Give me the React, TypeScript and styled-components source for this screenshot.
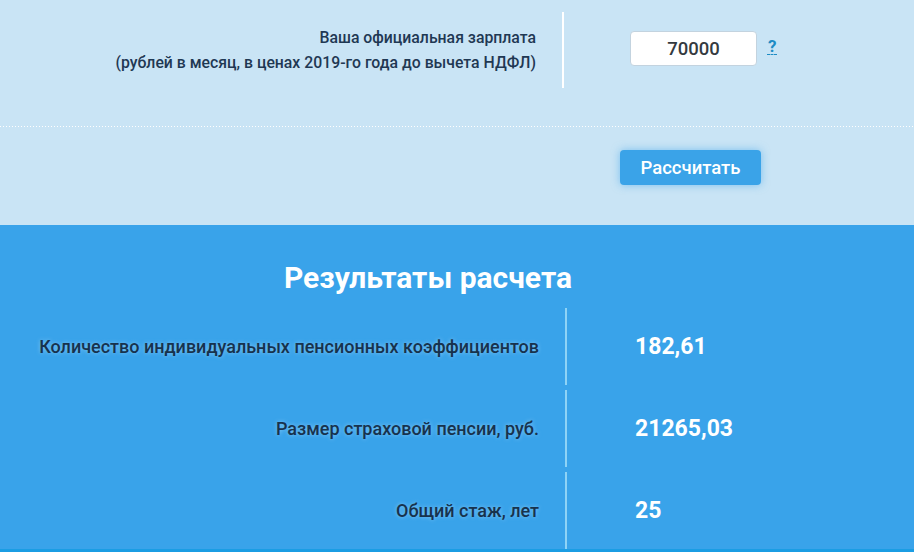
import styled, { createGlobalStyle } from "styled-components";

const GlobalStyle = createGlobalStyle`
    html, body {
        margin: 0;
        padding: 0;
        background: #c9e4f5;
        font-family: Roboto, "Liberation Sans", sans-serif;
    }
`;

const Page = styled.div`
    width: 914px;
    overflow: hidden;
`;

const Form = styled.section`
    background: #c9e4f5;
    padding-top: 12px;
    height: 213px;
`;

const FieldRow = styled.div`
    display: grid;
    grid-template-columns: 562px 2px 1fr;
    height: 76px;
`;

const FieldLabel = styled.div`
    display: flex;
    flex-direction: column;
    justify-content: center;
    align-items: flex-end;
    padding-right: 26px;
    font-size: 15.8px;
    font-weight: 500;
    line-height: 25px;
    color: #1f3853;
    text-align: right;
`;

const Divider = styled.div<{ $color: string }>`
    background: ${(p) => p.$color};
`;

const FieldControl = styled.div`
    display: flex;
    align-items: center;
    padding-left: 66px;
    padding-bottom: 3px;
    gap: 10px;
`;

const Input = styled.input`
    box-sizing: border-box;
    width: 127px;
    height: 35px;
    border: 1px solid #c3d3df;
    border-radius: 4px;
    background: #fff;
    text-align: center;
    font-family: Roboto, "Liberation Sans", sans-serif;
    font-size: 18.5px;
    font-weight: 500;
    color: #343a40;
    outline: none;
`;

const Hint = styled.span`
    font-size: 17px;
    font-weight: 700;
    color: #1e8cc4;
    border-bottom: 1px dashed #1e8cc4;
    line-height: 16px;
    margin-bottom: 4px;
    padding: 0 1px;
`;

const Dotted = styled.div`
    margin-top: 38px;
    height: 1px;
    background-image: linear-gradient(to right, #ffffff 50%, transparent 50%);
    background-size: 3px 1px;
`;

const Actions = styled.div`
    padding: 23px 0 0 620px;
`;

const Button = styled.button`
    width: 141px;
    height: 35px;
    border: none;
    border-radius: 4px;
    background: #3aa3e8;
    color: #fff;
    font-family: Roboto, "Liberation Sans", sans-serif;
    font-size: 18.5px;
    font-weight: 500;
    box-shadow: 0 0 8px rgba(58, 163, 232, 0.55);
    cursor: pointer;
`;

const Results = styled.section`
    background: #39a3ea;
    border-bottom: 3px solid #1b9de3;
    padding-top: 35px;
`;

const Title = styled.h2`
    margin: 0 0 12px;
    width: 856px;
    text-align: center;
    font-size: 30px;
    font-weight: 700;
    line-height: 36px;
    color: #fff;
`;

const ResultRow = styled.div`
    display: grid;
    grid-template-columns: 565px 2px 1fr;
    height: 77px;
    & + & {
        margin-top: 5px;
    }
`;

const ResultLabel = styled.div`
    display: flex;
    align-items: center;
    justify-content: flex-end;
    padding-right: 26px;
    font-size: 18px;
    font-weight: 500;
    color: #17324d;
    text-shadow: 0 0 4px rgba(180, 225, 255, 0.6);
`;

const ResultValue = styled.div`
    display: flex;
    align-items: center;
    padding-left: 68px;
    font-size: 23px;
    font-weight: 700;
    color: #fff;
`;

const results = [
    { label: "Количество индивидуальных пенсионных коэффициентов", value: "182,61" },
    { label: "Размер страховой пенсии, руб.", value: "21265,03" },
    { label: "Общий стаж, лет", value: "25" },
];

export default function App() {
    return (
        <Page>
            <GlobalStyle />
            <Form>
                <FieldRow>
                    <FieldLabel>
                        <span>Ваша официальная зарплата</span>
                        <span>(рублей в месяц, в ценах 2019-го года до вычета НДФЛ)</span>
                    </FieldLabel>
                    <Divider $color="#ffffff" />
                    <FieldControl>
                        <Input defaultValue="70000" />
                        <Hint>?</Hint>
                    </FieldControl>
                </FieldRow>
                <Dotted />
                <Actions>
                    <Button>Рассчитать</Button>
                </Actions>
            </Form>
            <Results>
                <Title>Результаты расчета</Title>
                {results.map((r) => (
                    <ResultRow key={r.label}>
                        <ResultLabel>{r.label}</ResultLabel>
                        <Divider $color="#8ed3f6" />
                        <ResultValue>{r.value}</ResultValue>
                    </ResultRow>
                ))}
            </Results>
        </Page>
    );
}
